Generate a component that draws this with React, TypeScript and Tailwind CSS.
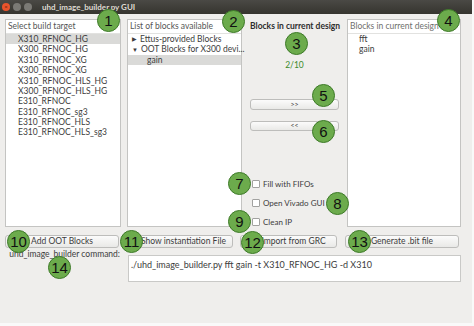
import React from "react";

const targets = [
  "X310_RFNOC_HG",
  "X300_RFNOC_HG",
  "X310_RFNOC_XG",
  "X300_RFNOC_XG",
  "X310_RFNOC_HLS_HG",
  "X300_RFNOC_HLS_HG",
  "E310_RFNOC",
  "E310_RFNOC_sg3",
  "E310_RFNOC_HLS",
  "E310_RFNOC_HLS_sg3",
];

// annotation markers laid over the screenshot
const badges = [
  { n: 1, pos: "left-[97px] top-[9px]" },
  { n: 2, pos: "left-[222px] top-[10px]" },
  { n: 3, pos: "left-[285px] top-[32px]" },
  { n: 4, pos: "left-[437px] top-[9px]" },
  { n: 5, pos: "left-[312px] top-[84px]" },
  { n: 6, pos: "left-[312px] top-[120px]" },
  { n: 7, pos: "left-[228px] top-[172px]" },
  { n: 8, pos: "left-[326px] top-[192px]" },
  { n: 9, pos: "left-[228px] top-[210px]" },
  { n: 10, pos: "left-[7px] top-[230px]" },
  { n: 11, pos: "left-[120px] top-[230px]" },
  { n: 12, pos: "left-[241px] top-[231px]" },
  { n: 13, pos: "left-[348px] top-[230px]" },
  { n: 14, pos: "left-[48px] top-[256px]" },
];

function Badge({ n, pos }: { n: number; pos: string }) {
  return (
    <div
      className={`absolute ${pos} w-[23px] h-[23px] rounded-full bg-[#6cab4c] border border-[#3d7a28] flex items-center justify-center text-[15px] leading-none text-[#111] font-['Liberation_Sans',sans-serif]`}
    >
      {n}
    </div>
  );
}

function ListBox({ title, titleClass, className, children }: { title: string; titleClass?: string; className?: string; children?: React.ReactNode }) {
  return (
    <div className={`bg-white border border-[#c4c4c2] flex flex-col ${className ?? ""}`}>
      <div className={`h-[14px] px-[2px] flex items-center border-b border-[#e2e2e0] whitespace-nowrap overflow-hidden ${titleClass ?? "text-[#555]"}`}>
        {title}
      </div>
      {children}
    </div>
  );
}

function Button({ label, className }: { label: string; className?: string }) {
  return (
    <div
      className={`h-[13px] rounded-[3px] border border-[#bdbdbb] bg-gradient-to-b from-[#fbfbfb] to-[#e9e9e7] flex items-center justify-center whitespace-nowrap text-[#3c3c3c] ${className ?? ""}`}
    >
      {label}
    </div>
  );
}

function Check({ label }: { label: string }) {
  return (
    <div className="flex items-center gap-[3px] h-[10px] whitespace-nowrap">
      <div className="w-[8px] h-[8px] rounded-[1px] border border-[#a2a2a0] bg-white" />
      <span className="text-[#3c3c3c] text-[8px]">{label}</span>
    </div>
  );
}

export default function App() {
  return (
    <div className="relative w-[474px] h-[326px] bg-[#f9f9f9] overflow-hidden font-['Lato','Noto_Sans',sans-serif] text-[8.5px] leading-none">
      <div className="w-[472px] h-[323px] bg-[#efeeec] flex flex-col">
        {/* title bar */}
        <div className="h-[14px] bg-gradient-to-b from-[#4a4945] to-[#36352f] flex items-center pl-[2px]">
          <div className="flex items-center gap-[3px]">
            <div className="w-[8px] h-[8px] rounded-full bg-[#e9542c] flex items-center justify-center text-[6px] text-[#5a1a0a]">×</div>
            <div className="w-[8px] h-[8px] rounded-full bg-[#7b7a75]" />
            <div className="w-[8px] h-[8px] rounded-full bg-[#7b7a75]" />
          </div>
          <span className="ml-[10px] text-[#dfdbd2] font-bold text-[8px]">uhd_image_builder.py GUI</span>
        </div>

        {/* main panels */}
        <div className="flex ml-[5px] mt-[5px] h-[208px]">
          <ListBox title="Select build target" className="w-[116px]">
            <div className="flex flex-col">
              {targets.map((t, i) => (
                <div key={t} className={`h-[10.4px] flex items-center pl-[12px] text-[#3c3c3c] ${i === 0 ? "bg-[#dadad8]" : ""}`}>
                  {t}
                </div>
              ))}
            </div>
          </ListBox>

          <ListBox title="List of blocks available" className="w-[115px] ml-[6px]">
            <div className="flex flex-col text-[#3c3c3c] whitespace-nowrap">
              <div className="h-[10.4px] flex items-center pl-[4px] gap-[3px]">
                <span className="text-[6px]">▶</span>
                <span>Ettus-provided Blocks</span>
              </div>
              <div className="h-[10.4px] flex items-center pl-[4px] gap-[3px]">
                <span className="text-[6px]">▼</span>
                <span>OOT Blocks for X300 devi...</span>
              </div>
              <div className="h-[10.4px] flex items-center pl-[19px] bg-[#dadad8]">gain</div>
            </div>
          </ListBox>

          <div className="w-[105px] flex flex-col items-stretch px-[8px]">
            <div className="mt-[3px] text-center font-bold text-[#2d2d2d] whitespace-nowrap">Blocks in current design</div>
            <div className="mt-[30px] text-center text-[#3b8a2b]">2/10</div>
            <Button label=">>" className="mt-[30px] h-[12px] text-[7px]" />
            <Button label="<<" className="mt-[11px] h-[12px] text-[7px]" />
            <div className="mt-[48px] ml-[2px] flex flex-col gap-[9px]">
              <Check label="Fill with FIFOs" />
              <Check label="Open Vivado GUI" />
              <Check label="Clean IP" />
            </div>
          </div>

          <ListBox title="Blocks in current design" titleClass="text-[#6f6f6d]" className="w-[114px]">
            <div className="flex flex-col text-[#3c3c3c] pl-[11px]">
              <div className="h-[10.4px] flex items-center">fft</div>
              <div className="h-[10.4px] flex items-center">gain</div>
            </div>
          </ListBox>
        </div>

        {/* action buttons */}
        <div className="flex ml-[5px] mt-[8px]">
          <Button label="Add OOT Blocks" className="w-[114px]" />
          <Button label="Show instantiation File" className="w-[107px] ml-[7px] pl-[8px]" />
          <Button label="Import from GRC" className="w-[97px] ml-[7px] pl-[10px]" />
          <Button label="Generate .bit file" className="w-[114px] ml-[8px]" />
        </div>

        {/* command line */}
        <div className="flex items-start ml-[5px] mt-[7px]">
          <div className="w-[115px] -mt-[5px] text-right text-[#3c3c3c] whitespace-nowrap">uhd_image_builder command:</div>
          <div className="ml-[8px] w-[333px] h-[27px] bg-white border border-[#c9c9c7] px-[2px] pt-[4px] text-[9px] text-[#3c3c3c] whitespace-nowrap">
            ./uhd_image_builder.py fft gain -t X310_RFNOC_HG -d X310
          </div>
        </div>
      </div>

      {badges.map((b) => (
        <Badge key={b.n} n={b.n} pos={b.pos} />
      ))}
    </div>
  );
}
